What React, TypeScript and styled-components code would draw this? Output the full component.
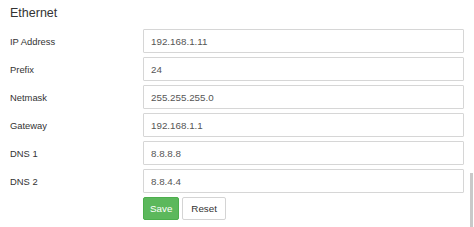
import { Fragment } from "react";
import styled, { createGlobalStyle } from "styled-components";

const GlobalStyle = createGlobalStyle`
    html, body {
        margin: 0;
        padding: 0;
        background: #ffffff;
        overflow: hidden;
    }
`;

const Page = styled.div`
    position: relative;
    width: 474px;
    height: 227px;
    padding: 0 10px 0 10px;
    box-sizing: border-box;
    font-family: "Liberation Sans", Arial, sans-serif;
    color: #333333;
`;

const Title = styled.div`
    font-size: 12.5px;
    line-height: 15px;
    padding-top: 6px;
    height: 29px;
    box-sizing: border-box;
    color: #333333;
`;

const Form = styled.div`
    display: grid;
    grid-template-columns: 133px 321px;
    row-gap: 4px;
    align-items: center;
`;

const Label = styled.label`
    font-size: 9.4px;
    color: #333333;
`;

const Input = styled.input`
    height: 24px;
    box-sizing: border-box;
    border: 1px solid #d6d6d6;
    border-radius: 1px;
    padding: 0 7px;
    font-family: "Liberation Sans", Arial, sans-serif;
    font-size: 9.8px;
    color: #555555;
    outline: none;
    width: 100%;
`;

const Actions = styled.div`
    grid-column: 2;
    display: flex;
    gap: 3px;
`;

const Button = styled.button<{ $primary?: boolean }>`
    height: 23px;
    box-sizing: border-box;
    padding: 0 ${(p) => (p.$primary ? "6px" : "8px")};
    font-family: "Liberation Sans", Arial, sans-serif;
    font-size: 9.8px;
    border-radius: 2px;
    border: 1px solid ${(p) => (p.$primary ? "#4cae4c" : "#d4d4d4")};
    background: ${(p) => (p.$primary ? "#5cb85c" : "#ffffff")};
    color: ${(p) => (p.$primary ? "#ffffff" : "#333333")};
`;

const Scrollbar = styled.div`
    position: absolute;
    right: 1px;
    top: 173px;
    width: 3px;
    height: 54px;
    background: #c9c9c9;
`;

const fields = [
    { label: "IP Address", value: "192.168.1.11" },
    { label: "Prefix", value: "24" },
    { label: "Netmask", value: "255.255.255.0" },
    { label: "Gateway", value: "192.168.1.1" },
    { label: "DNS 1", value: "8.8.8.8" },
    { label: "DNS 2", value: "8.8.4.4" },
];

const App = () => {
    return (
        <>
            <GlobalStyle />
            <Page>
                <Title>Ethernet</Title>
                <Form>
                    {fields.map((f) => (
                        <Fragment key={f.label}>
                            <Label>{f.label}</Label>
                            <Input defaultValue={f.value} />
                        </Fragment>
                    ))}
                    <Actions>
                        <Button $primary>Save</Button>
                        <Button>Reset</Button>
                    </Actions>
                </Form>
                <Scrollbar />
            </Page>
        </>
    );
};

export default App;
